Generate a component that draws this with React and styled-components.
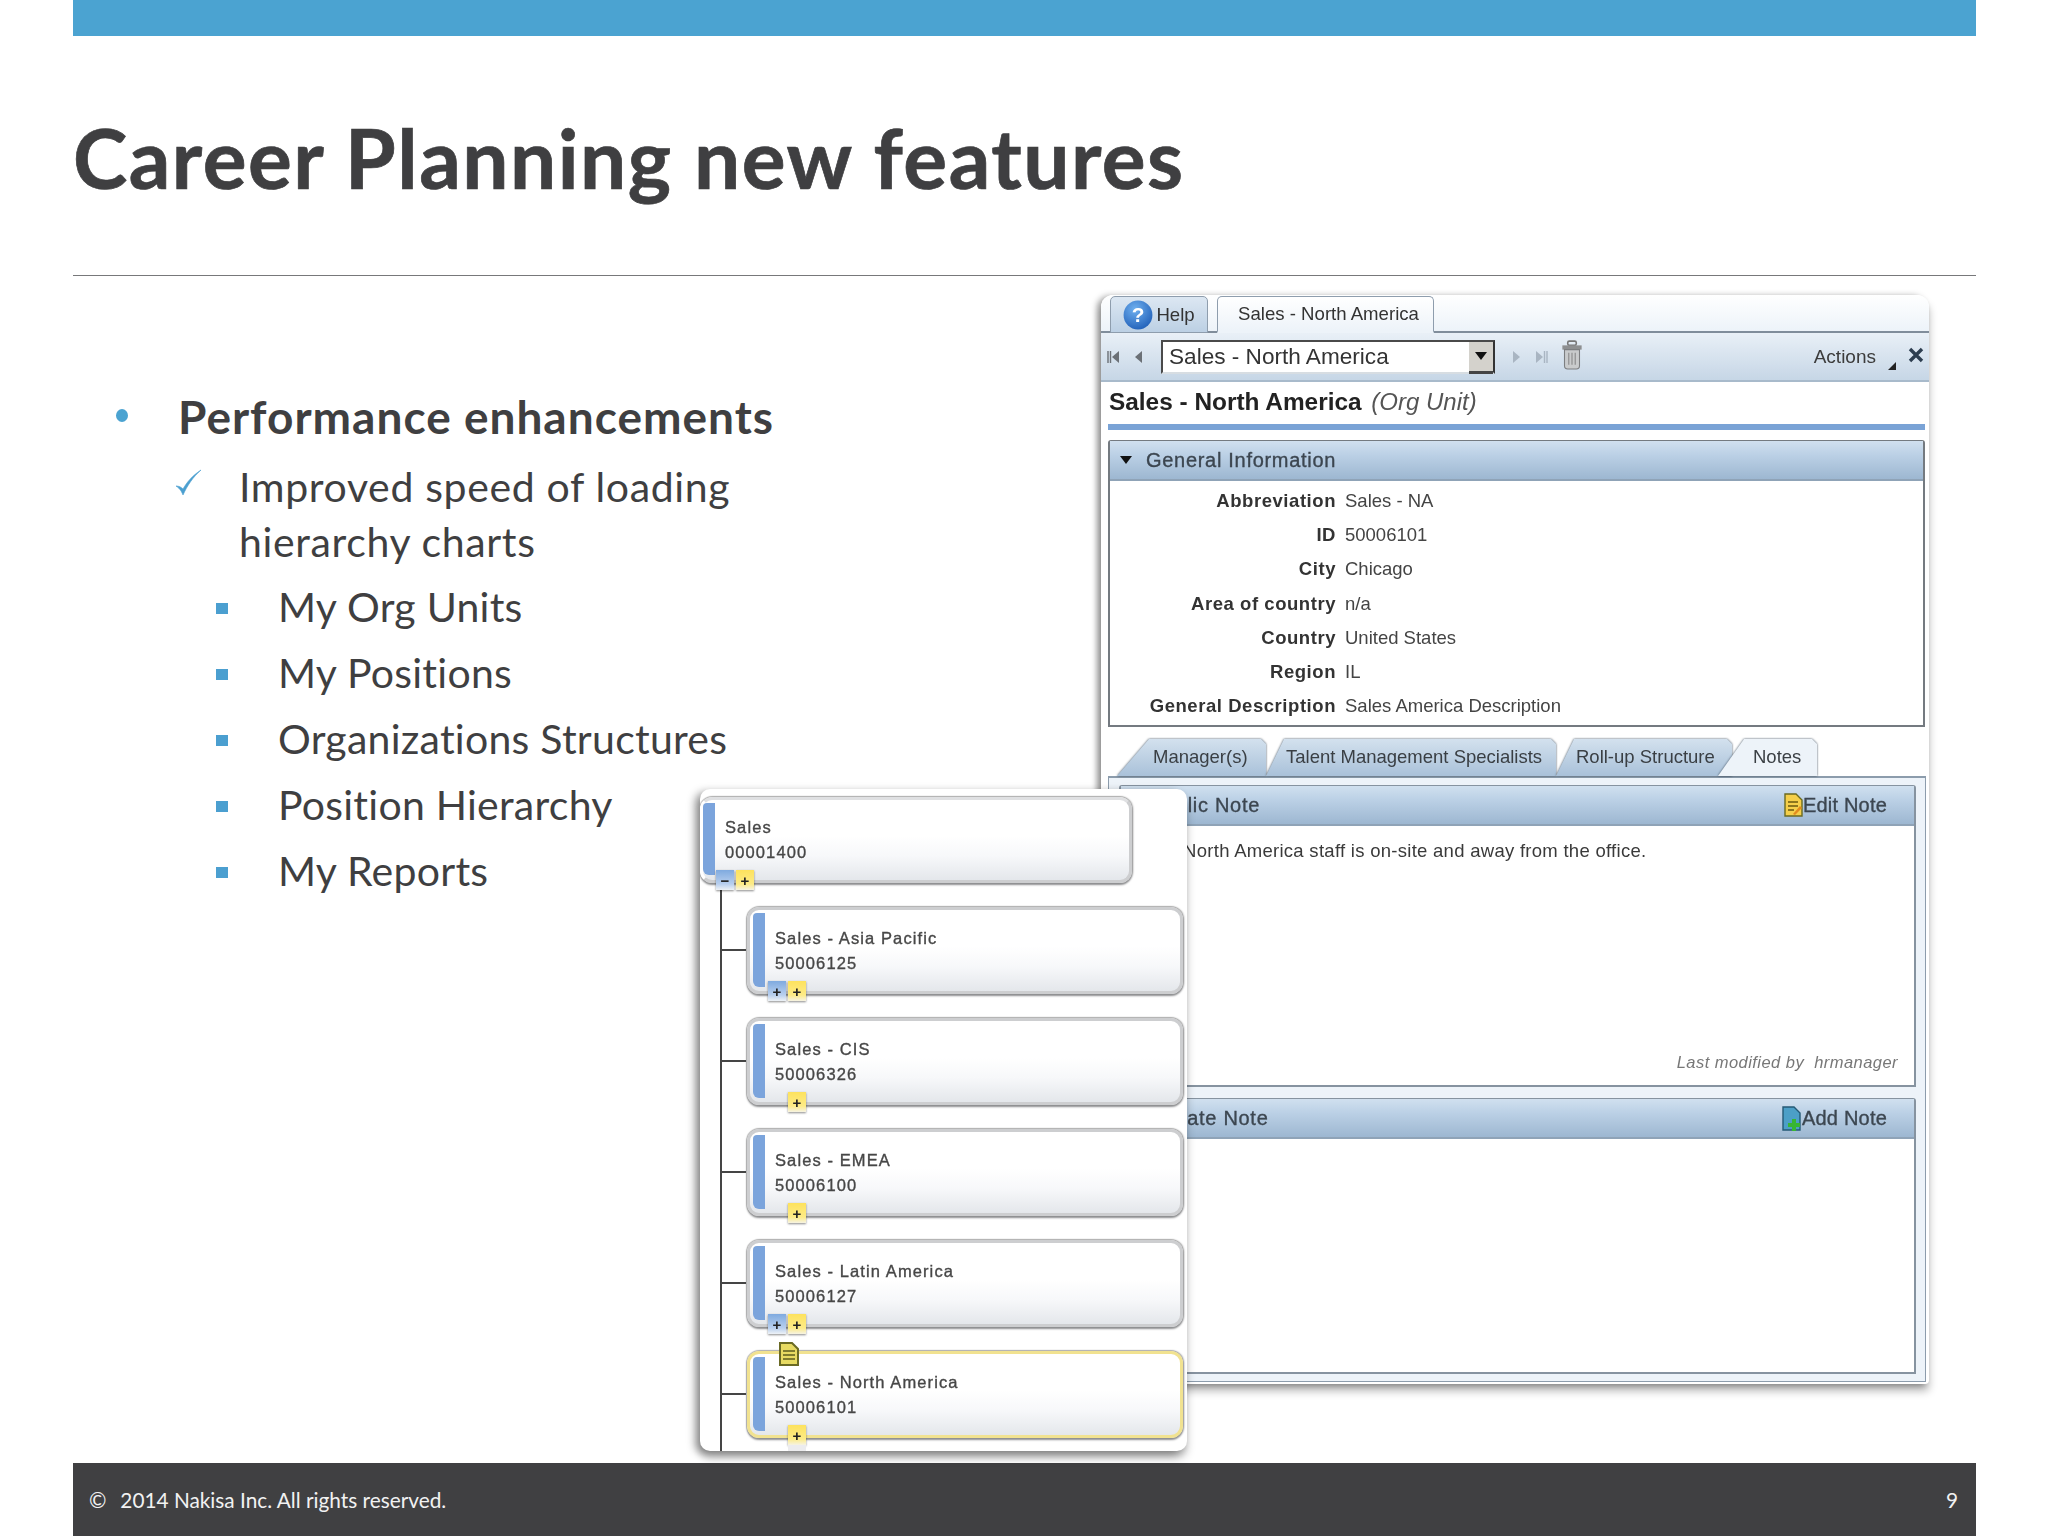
import React from "react";
import styled, { createGlobalStyle } from "styled-components";

const Global = createGlobalStyle`
  html, body { margin: 0; padding: 0; background: #fff; }
  * { box-sizing: border-box; }
`;

const Slide = styled.div`
  position: relative; width: 2048px; height: 1536px; padding: 0 72px 0 73px;
  display: flex; flex-direction: column; overflow: hidden; background: #fff;
  font-family: "Lato", "Liberation Sans", sans-serif; color: #3f3f41;
`;
const TopBar = styled.div`height: 36px; background: #4ba3d1; flex: none;`;
const Header = styled.header`
  height: 240px; flex: none; padding-top: 71px; border-bottom: 1px solid #77787a;
`;
const Title = styled.h1`
  margin: 0; font-size: 82px; line-height: 100px; font-weight: 700; white-space: nowrap; letter-spacing: 1.5px;
  -webkit-text-stroke: .7px #3f3f41;
`;
const Bullets = styled.div`flex: 1; padding-top: 113px; display: flex; flex-direction: column;`;
const BulletRow = styled.div`
  display: flex; margin-left: ${p => p.$indent}px; margin-top: ${p => p.$top || 0}px;
  width: ${p => p.$width || 700}px; letter-spacing: ${p => p.$ls || 0}px;
  font-size: ${p => p.$size}px; line-height: ${p => p.$lh}px; font-weight: ${p => p.$bold ? 700 : 400};
`;
const Marker = styled.span`
  flex: none; width: ${p => p.$w}px; display: flex; align-items: center; height: ${p => p.$lh}px;
`;
const Dot = styled.i`display: block; width: 12px; height: 13px; border-radius: 50%; background: #4ba3d1; margin-top: -4px;`;
const Square = styled.i`display: block; width: 12px; height: 11px; background: #4b9fd0; margin-top: 2px;`;
const Spacer = styled.div`height: 5px; flex: none;`;
const Footer = styled.footer`
  flex: none; height: 73px; background: #404042; color: #f2f2f2; display: flex; align-items: center;
  justify-content: space-between; padding: 0 18px 0 16px; font-size: 20.8px;
`;
const Copy = styled.span`display: inline-block; width: 26px; font-size: 21px;`;

/* right-hand screenshot window */
const Win = styled.section`
  position: absolute; left: 1101px; top: 295px; width: 828px; height: 1089px;
  background: #fff; border-radius: 12px 12px 4px 4px; display: flex; flex-direction: column;
  box-shadow: -4px 1px 6px rgba(0,0,0,.35), 0 7px 9px rgba(0,0,0,.28);
  font-family: "Liberation Sans", Arial, sans-serif; color: #333; filter: blur(.55px);
`;
const TabStrip = styled.div`
  height: 38px; flex: none; padding-left: 9px; display: flex; gap: 9px; align-items: flex-end;
  background: linear-gradient(#fff, #edf3f9); border-bottom: 2px solid #808d9b; border-radius: 12px 12px 0 0;
`;
const TopTab = styled.div`
  height: 37px; width: ${p => p.$w}px; display: flex; align-items: center; justify-content: center; gap: 3px;
  padding-left: ${p => p.$pl || 0}px;
  margin-bottom: -2px; border: 1px solid #8e9dad; border-bottom: ${p => p.$on ? "2px solid #edf3f9" : "1px solid #8e9dad"};
  border-radius: 5px 5px 0 0; font-size: 18.6px;
  background: ${p => p.$on ? "linear-gradient(#fff,#edf3f9)" : "linear-gradient(#dce7f2,#bcd0e4)"};
`;
const Toolbar = styled.div`
  height: 49px; flex: none; display: flex; align-items: center; padding: 0 5px 0 6px;
  background: linear-gradient(#e9f0f7, #c6d6e6); border-bottom: 2px solid #a8bacb;
`;
const Combo = styled.div`
  width: 334px; height: 34px; margin: 0 16px 0 17px; display: flex; background: #fff;
  border: 2px solid #4a4a4a; border-right-color: #333; border-bottom-color: #d7dde2;
  font-size: 22.6px; line-height: 30px; padding-left: 6px; justify-content: space-between;
`;
const ComboBtn = styled.div`
  width: 24px; background: #d4d2cc; display: flex; align-items: center; justify-content: center;
  border-bottom: 3px solid #444; margin-bottom: -2px;
`;
const Actions = styled.div`margin-left: auto; font-size: 19px; display: flex; align-items: center; gap: 12px; color: #3c3c3c;`;
const Heading = styled.div`
  height: 42px; flex: none; padding-left: 8px; font-size: 24.4px; line-height: 40px; font-weight: 700; color: #222;
`;
const HeadingKind = styled.em`font-weight: 400; color: #555; margin-left: 3px; font-size: 24px;`;
const BlueBar = styled.div`height: 6px; flex: none; margin: 0 4px 0 7px; background: #7aa3d6;`;
const InfoBox = styled.div`
  height: 287px; flex: none; margin: 10px 4px 0 7px; border: 2px solid #747a80; border-top-width: 1px; border-radius: 3px 3px 0 0;
`;
const SectionBar = styled.div`
  height: ${p => p.$h || 40}px; display: flex; align-items: center; justify-content: space-between;
  padding: 0 ${p => p.$pr || 0}px 0 ${p => p.$pl || 0}px; font-size: 20px; letter-spacing: .7px; color: #3c4650;
  background: linear-gradient(#d0e0ef, #bcd1e6 35%, #9db7d1); border-bottom: 2px solid #8fa3b7;
`;
const InfoTitle = styled.span`display: flex; align-items: center; gap: 14px; -webkit-text-stroke: .35px #3c4650;`;
const InfoRows = styled.div`padding-top: 3px; display: flex; flex-direction: column;`;
const InfoRow = styled.div`
  height: 34.2px; display: grid; grid-template-columns: 226px 1fr; column-gap: 9px; align-items: center; font-size: 18.5px;
`;
const InfoLabel = styled.span`text-align: right; font-weight: 700; color: #333; letter-spacing: .55px;`;
const InfoValue = styled.span`color: #444;`;
const SubTabs = styled.div`
  height: 37px; flex: none; margin: 12px 4px 0 16px; display: flex;
`;
const SubTabShell = styled.div`
  width: ${p => p.$w}px; margin-left: ${p => p.$ml || 0}px; z-index: ${p => p.$on ? 2 : 1};
  filter: drop-shadow(0 0 .8px #3f4f5f);
`;
const SubTabFace = styled.div`
  height: 37px; padding-left: ${p => p.$pl}px; font-size: 18.5px; line-height: 35px; color: #3a3f44;
  clip-path: polygon(${p => p.$slope}px 0, calc(100% - 5px) 0, 100% 5px, 100% 100%, 0 100%);
  background: ${p => p.$on ? "#edf3f9" : "linear-gradient(#d3e1ee,#a9c1d9)"};
`;
const TabBody = styled.div`
  flex: 1; margin: 0 3px 4px 7px; padding: 7px 9px 7px 10px; border: 1px solid #8c9cac; border-top: 2px solid #8c9cac;
  background: #edf3f9; display: flex; flex-direction: column; gap: 11px;
`;
const NoteBox = styled.div`
  height: ${p => p.$h}px; flex: none; background: #fff; border: 2px solid #8693a0; border-top-width: 1px;
  border-radius: 3px 3px 0 0; display: flex; flex-direction: column;
`;
const NoteAction = styled.span`display: flex; align-items: center; gap: 0; letter-spacing: .2px; -webkit-text-stroke: .35px #3c4650;`;
const NoteTitle = styled.span`-webkit-text-stroke: .35px #3c4650; padding-left: ${p => p.$pl}px;`;
const NoteBody = styled.div`
  flex: 1; display: flex; flex-direction: column; justify-content: space-between;
  padding: 14px 16px 13px ${p => p.$pl || 0}px; font-size: 18.5px; letter-spacing: .28px; color: #3a3a3a;
`;
const Modified = styled.div`text-align: right; font-style: italic; color: #777; font-size: 16.5px; letter-spacing: .45px;`;

/* org chart screenshot */
const OrgOuter = styled.div`position: absolute; left: 0; top: 0; width: 2048px; height: 1536px; pointer-events: none;`;
const Org = styled.section`
  position: absolute; left: 700px; top: 789px; width: 487px; height: 662px; padding-top: 8px; overflow: hidden;
  background: #fff; border-radius: 10px; z-index: 3;
  box-shadow: -5px 3px 8px rgba(0,0,0,.38), 0 7px 9px rgba(0,0,0,.25);
`;
const OrgInner = styled.div`filter: blur(.55px); font-family: "Liberation Sans", Arial, sans-serif;`;
const Card = styled.div`
  position: relative; height: ${p => p.$root ? 86 : 87}px; width: ${p => p.$root ? 432 : 436}px; display: flex;
  padding: ${p => p.$root ? "3px 3px 5px 0" : "3px 3px 4px 3px"};
  border: 3px solid ${p => p.$sel ? "#f1e290" : "#cdced0"}; border-radius: 12px;
  ${p => p.$root ? "border-left-color: #fff; border-top-color:#dfe0e2;" : ""}
  background: linear-gradient(#fff 45%, #f7f8fa 70%, #e4e7eb);
  box-shadow: 0 2px 2px #8d8e90, 1px 0 2px #999, 0 -1px 1px #bbb, -1px 0 1px #bbb;
  &::before {
    content: ${p => p.$root ? "none" : '""'}; position: absolute; left: -29px; top: 39px; width: 25px; height: 2px; background: #454545;
  }
`;
const Strip = styled.div`flex: none; width: 12px; background: #7ba4dc; border-radius: 4px 0 0 6px;`;
const CardText = styled.div`
  padding: 1px 0 0 10px; display: flex; flex-direction: column; justify-content: center; font-size: 16.5px; line-height: 25px;
  letter-spacing: 1.1px; color: #474747; -webkit-text-stroke: .35px #474747;
`;
const Badges = styled.div`
  position: absolute; left: ${p => p.$root ? 13 : 18}px; bottom: -10px; display: flex; gap: 2px; width: 38px; justify-content: flex-end;
`;
const Badge = styled.div`
  width: 18px; height: 20px; display: flex; align-items: center; justify-content: center; font: 700 15px/1 "Liberation Sans", sans-serif; color: #222;
  background: ${p => p.$blue ? "linear-gradient(#7faadf,#b8cfee 70%,#eef2f6)" : "linear-gradient(#fde25d,#fdeb86 70%,#f6f3e3)"};
  box-shadow: 0 1px 2px rgba(0,0,0,.45);
`;
const Tree = styled.div`
  margin: 7px 0 0 20px; padding: 17px 0 30px 25px; border-left: 2px solid #454545; display: flex; flex-direction: column; gap: 24px;
`;
const CardNote = styled.div`position: absolute; left: 29px; top: -12px; line-height: 0;`;
const Ghost = styled.div`position: absolute; left: 38px; bottom: -16px; width: 18px; height: 6px; background: #ececee;`;

const Help = () => (
  <svg width="30" height="30" viewBox="0 0 26 26">
    <defs><radialGradient id="h" cx=".4" cy=".3" r=".8"><stop offset="0" stopColor="#6fb0ef"/><stop offset="1" stopColor="#1c5bb5"/></radialGradient></defs>
    <circle cx="13" cy="13" r="12.5" fill="url(#h)"/>
    <text x="13" y="19" textAnchor="middle" fontFamily="Liberation Sans" fontWeight="700" fontSize="18" fill="#fff">?</text>
  </svg>
);
const Nav = ({ bar, dir = 1, color = "#6b7076", mr = 0 }) => (
  <svg width="14" height="16" viewBox="0 0 14 16" style={{ transform: dir < 0 ? "scaleX(-1)" : undefined, marginRight: mr }}>
    <path d="M2 2l7 6-7 6z" fill={color}/>
    {bar && <path d="M10.5 2v12M13 2v12" stroke={color} strokeWidth="1.4"/>}
  </svg>
);
const Trash = () => (
  <svg width="24" height="30" viewBox="0 0 22 28" style={{ marginTop: -3 }}>
    <rect x="7" y="1" width="8" height="4" rx="1.5" fill="none" stroke="#777" strokeWidth="1.5"/>
    <path d="M2 5h18v4H2z" fill="#8d8f90"/>
    <path d="M4 9h14v15q0 3-3 3H7q-3 0-3-3z" fill="#c9cbcc" stroke="#7c7e80"/>
    <path d="M8 12v11M11 12v11M14 12v11" stroke="#888"/>
  </svg>
);
const Caret = ({ w = 12, h = 8, color = "#111" }) => (
  <svg width={w} height={h} viewBox="0 0 12 8"><path d="M0 0h12L6 8z" fill={color}/></svg>
);
const Corner = () => (
  <svg width="8" height="8" viewBox="0 0 8 8" style={{ marginTop: 18 }}><path d="M8 0v8H0z" fill="#222"/></svg>
);
const Close = () => (
  <svg width="16" height="16" viewBox="0 0 16 16" style={{ marginTop: -4 }}><path d="M2 2l12 12M14 2L2 14" stroke="#2d3e50" strokeWidth="3.4"/></svg>
);
const EditIcon = () => (
  <svg width="19" height="24" viewBox="0 0 19 24">
    <path d="M1 1h11l6 6v16H1z" fill="#f5cf4a" stroke="#6b6a20" strokeWidth="1.4"/>
    <path d="M4 9h10M4 13h10M4 17h6" stroke="#6b5a10" strokeWidth="1.4"/>
    <path d="M9 21l7-8 2 2-7 7z" fill="#e28b1e"/>
  </svg>
);
const AddIcon = () => (
  <svg width="20" height="25" viewBox="0 0 20 25">
    <path d="M1 1h11l6 6v17H1z" fill="#4c9fc7" stroke="#245a76" strokeWidth="1.4"/>
    <path d="M6 17h4v-4h4v4h4v4h-4v4h-4v-4H6z" fill="#37b534"/>
  </svg>
);
const NoteIcon = () => (
  <svg width="20" height="24" viewBox="0 0 20 24">
    <path d="M1 1h12l6 6v16H1z" fill="#e7da62" stroke="#6a6a24" strokeWidth="2"/>
    <path d="M4 9h12M4 13h12M4 17h12" stroke="#5d5d1e" strokeWidth="1.6"/>
  </svg>
);

const info = [
  ["Abbreviation", "Sales - NA"], ["ID", "50006101"], ["City", "Chicago"], ["Area of country", "n/a"],
  ["Country", "United States"], ["Region", "IL"], ["General Description", "Sales America Description"],
];
const subItems = ["My Org Units", "My Positions", "Organizations Structures", "Position Hierarchy", "My Reports"];
const units = [
  { t: "Sales - Asia Pacific", id: "50006125", blue: true },
  { t: "Sales - CIS", id: "50006326" },
  { t: "Sales - EMEA", id: "50006100" },
  { t: "Sales - Latin America", id: "50006127", blue: true },
  { t: "Sales - North America", id: "50006101", sel: true },
];

export default function App() {
  return (
    <>
      <Global />
      <Slide>
        <TopBar />
        <Header><Title>Career Planning new features</Title></Header>
        <Bullets>
          <BulletRow $indent={43} $size={46} $lh={56} $ls={1} $bold>
            <Marker $w={62} $lh={56}><Dot /></Marker>Performance enhancements
          </BulletRow>
          <BulletRow $indent={103} $size={41} $lh={55} $ls={.65} $top={14} $width={560}>
            <Marker $w={63} $lh={50}>
              <svg width="26" height="30" viewBox="0 0 26 30"><path d="M0 17c3 2 5 4 7 9C11 17 17 8 25 1 16 7 11 13 7 20 5 18 3 17 0 17z" fill="#4b9fd0" stroke="#4b9fd0" strokeWidth=".6"/></svg>
            </Marker>
            <span>Improved speed of loading hierarchy charts</span>
          </BulletRow>
          <Spacer />
          {subItems.map(s => (
            <BulletRow key={s} $indent={143} $size={41} $lh={66} $ls={.25}>
              <Marker $w={62} $lh={66}><Square /></Marker>{s}
            </BulletRow>
          ))}
        </Bullets>
        <Footer>
          <span><Copy>©</Copy> 2014 Nakisa Inc. All rights reserved.</span>
          <span>9</span>
        </Footer>

        <Win>
          <TabStrip>
            <TopTab $w={98}><Help />Help</TopTab>
            <TopTab $w={217} $pl={6} $on>Sales - North America</TopTab>
          </TabStrip>
          <Toolbar>
            <Nav bar dir={-1} mr={9} />
            <Nav dir={-1} />
            <Combo>Sales - North America<ComboBtn><Caret /></ComboBtn></Combo>
            <Nav color="#a9b5c2" mr={9} />
            <Nav bar color="#a9b5c2" mr={12} />
            <Trash />
            <Actions>Actions<Corner /><Close /></Actions>
          </Toolbar>
          <Heading>Sales - North America <HeadingKind>(Org Unit)</HeadingKind></Heading>
          <BlueBar />
          <InfoBox>
            <SectionBar $pl={10}><InfoTitle><Caret color="#111" />General Information</InfoTitle></SectionBar>
            <InfoRows>
              {info.map(([k, v]) => (
                <InfoRow key={k}><InfoLabel>{k}</InfoLabel><InfoValue>{v}</InfoValue></InfoRow>
              ))}
            </InfoRows>
          </InfoBox>
          <SubTabs>
            <SubTabShell $w={149}><SubTabFace $pl={36} $slope={32}>Manager(s)</SubTabFace></SubTabShell>
            <SubTabShell $w={290}><SubTabFace $pl={20} $slope={18}>Talent Management Specialists</SubTabFace></SubTabShell>
            <SubTabShell $w={176}><SubTabFace $pl={20} $slope={18}>Roll-up Structure</SubTabFace></SubTabShell>
            <SubTabShell $w={99} $ml={-14} $on><SubTabFace $on $pl={35} $slope={26}>Notes</SubTabFace></SubTabShell>
          </SubTabs>
          <TabBody>
            <NoteBox $h={302}>
              <SectionBar $pr={27}>
                <NoteTitle $pl={29}>Public Note</NoteTitle>
                <NoteAction><EditIcon />Edit Note</NoteAction>
              </SectionBar>
              <NoteBody $pl={9}>
                <div>Sales North America staff is on-site and away from the office.</div>
                <Modified>Last modified by&nbsp;&nbsp;hrmanager</Modified>
              </NoteBody>
            </NoteBox>
            <NoteBox $h={276}>
              <SectionBar $pr={27}>
                <NoteTitle $pl={29}>Private Note</NoteTitle>
                <NoteAction><AddIcon />Add Note</NoteAction>
              </SectionBar>
            </NoteBox>
          </TabBody>
        </Win>

        <OrgOuter>
          <Org>
            <OrgInner>
              <Card $root>
                <Strip />
                <CardText><span>Sales</span><span>00001400</span></CardText>
                <Badges $root><Badge $blue>−</Badge><Badge>+</Badge></Badges>
              </Card>
              <Tree>
                {units.map(u => (
                  <Card key={u.id} $sel={u.sel}>
                    <Strip />
                    <CardText><span>{u.t}</span><span>{u.id}</span></CardText>
                    {u.sel && <CardNote><NoteIcon /></CardNote>}
                    <Badges>{u.blue && <Badge $blue>+</Badge>}<Badge>+</Badge></Badges>
                    {u.sel && <Ghost />}
                  </Card>
                ))}
              </Tree>
            </OrgInner>
          </Org>
        </OrgOuter>
      </Slide>
    </>
  );
}
